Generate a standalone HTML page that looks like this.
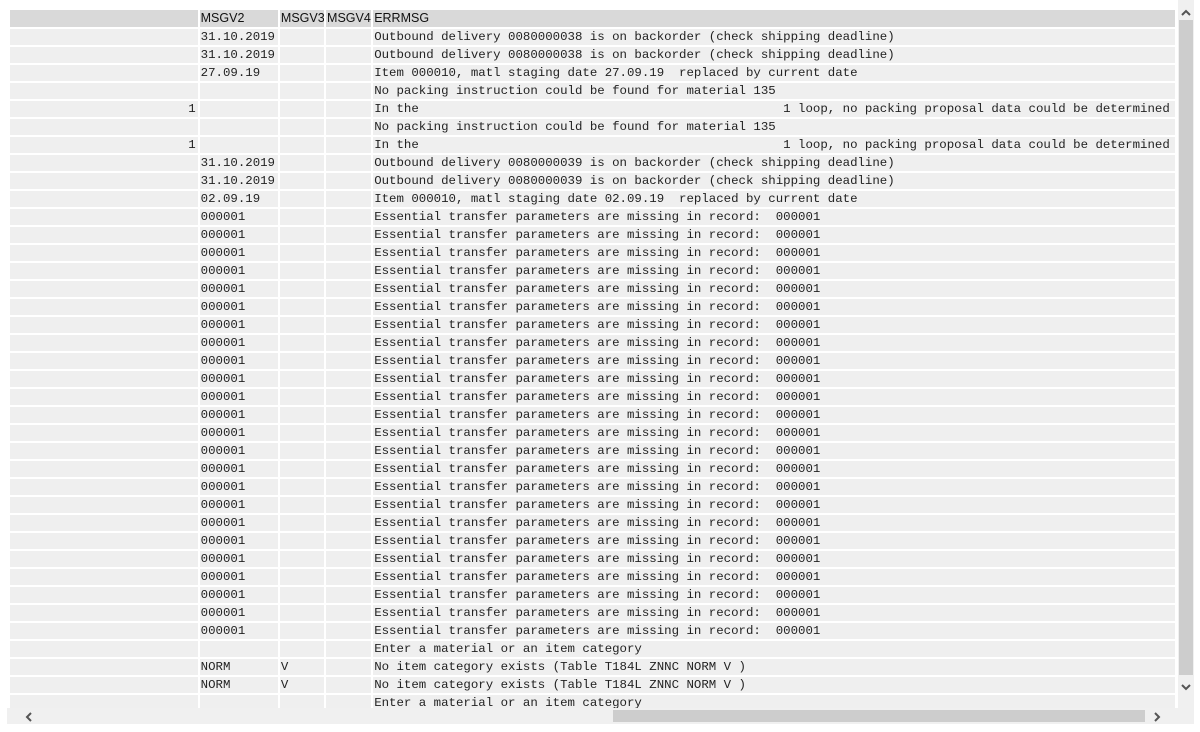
<!DOCTYPE html>
<html><head><meta charset="utf-8"><style>
body{margin:0;width:1200px;height:732px;background:#fff;position:relative;overflow:hidden}
#wrap{position:absolute;left:8px;top:8px;width:1167px;height:700px;overflow:hidden}
table{border-collapse:separate;border-spacing:2px;table-layout:fixed;width:1173px}
td,th{background:#efefef;height:16px;padding:0 0 0 1px;font:12.4px/16px "Liberation Mono","Courier New",monospace;color:#222;white-space:pre;overflow:hidden;text-align:left;vertical-align:middle}
th{background:#d9d9d9;height:16px;font:12.5px/17px "Liberation Sans",Arial,sans-serif;font-weight:normal;color:#111;padding-left:1px}
td.r{text-align:right;padding:0 2px 0 0}
#vs{position:absolute;left:1178px;top:0;width:16px;height:708px;background:#f0f0f0}
#vt{position:absolute;left:1179px;top:20px;width:14px;height:655px;background:#cdcdcd}
#hs{position:absolute;left:7px;top:708px;width:1187px;height:16px;background:#f0f0f0}
#ht{position:absolute;left:613px;top:710px;width:532px;height:12px;background:#cdcdcd}
svg{position:absolute}
</style></head><body>
<div id="wrap"><table>
<colgroup><col style="width:187px"><col style="width:78px"><col style="width:44px"><col style="width:45px"><col style="width:803px"></colgroup>
<tr><th></th><th>MSGV2</th><th>MSGV3</th><th>MSGV4</th><th>ERRMSG</th></tr>
<tr><td></td><td>31.10.2019</td><td></td><td></td><td>Outbound delivery 0080000038 is on backorder (check shipping deadline)</td></tr>
<tr><td></td><td>31.10.2019</td><td></td><td></td><td>Outbound delivery 0080000038 is on backorder (check shipping deadline)</td></tr>
<tr><td></td><td>27.09.19</td><td></td><td></td><td>Item 000010, matl staging date 27.09.19  replaced by current date</td></tr>
<tr><td></td><td></td><td></td><td></td><td>No packing instruction could be found for material 135</td></tr>
<tr><td class="r">1</td><td></td><td></td><td></td><td>In the                                                 1 loop, no packing proposal data could be determined</td></tr>
<tr><td></td><td></td><td></td><td></td><td>No packing instruction could be found for material 135</td></tr>
<tr><td class="r">1</td><td></td><td></td><td></td><td>In the                                                 1 loop, no packing proposal data could be determined</td></tr>
<tr><td></td><td>31.10.2019</td><td></td><td></td><td>Outbound delivery 0080000039 is on backorder (check shipping deadline)</td></tr>
<tr><td></td><td>31.10.2019</td><td></td><td></td><td>Outbound delivery 0080000039 is on backorder (check shipping deadline)</td></tr>
<tr><td></td><td>02.09.19</td><td></td><td></td><td>Item 000010, matl staging date 02.09.19  replaced by current date</td></tr>
<tr><td></td><td>000001</td><td></td><td></td><td>Essential transfer parameters are missing in record:  000001</td></tr>
<tr><td></td><td>000001</td><td></td><td></td><td>Essential transfer parameters are missing in record:  000001</td></tr>
<tr><td></td><td>000001</td><td></td><td></td><td>Essential transfer parameters are missing in record:  000001</td></tr>
<tr><td></td><td>000001</td><td></td><td></td><td>Essential transfer parameters are missing in record:  000001</td></tr>
<tr><td></td><td>000001</td><td></td><td></td><td>Essential transfer parameters are missing in record:  000001</td></tr>
<tr><td></td><td>000001</td><td></td><td></td><td>Essential transfer parameters are missing in record:  000001</td></tr>
<tr><td></td><td>000001</td><td></td><td></td><td>Essential transfer parameters are missing in record:  000001</td></tr>
<tr><td></td><td>000001</td><td></td><td></td><td>Essential transfer parameters are missing in record:  000001</td></tr>
<tr><td></td><td>000001</td><td></td><td></td><td>Essential transfer parameters are missing in record:  000001</td></tr>
<tr><td></td><td>000001</td><td></td><td></td><td>Essential transfer parameters are missing in record:  000001</td></tr>
<tr><td></td><td>000001</td><td></td><td></td><td>Essential transfer parameters are missing in record:  000001</td></tr>
<tr><td></td><td>000001</td><td></td><td></td><td>Essential transfer parameters are missing in record:  000001</td></tr>
<tr><td></td><td>000001</td><td></td><td></td><td>Essential transfer parameters are missing in record:  000001</td></tr>
<tr><td></td><td>000001</td><td></td><td></td><td>Essential transfer parameters are missing in record:  000001</td></tr>
<tr><td></td><td>000001</td><td></td><td></td><td>Essential transfer parameters are missing in record:  000001</td></tr>
<tr><td></td><td>000001</td><td></td><td></td><td>Essential transfer parameters are missing in record:  000001</td></tr>
<tr><td></td><td>000001</td><td></td><td></td><td>Essential transfer parameters are missing in record:  000001</td></tr>
<tr><td></td><td>000001</td><td></td><td></td><td>Essential transfer parameters are missing in record:  000001</td></tr>
<tr><td></td><td>000001</td><td></td><td></td><td>Essential transfer parameters are missing in record:  000001</td></tr>
<tr><td></td><td>000001</td><td></td><td></td><td>Essential transfer parameters are missing in record:  000001</td></tr>
<tr><td></td><td>000001</td><td></td><td></td><td>Essential transfer parameters are missing in record:  000001</td></tr>
<tr><td></td><td>000001</td><td></td><td></td><td>Essential transfer parameters are missing in record:  000001</td></tr>
<tr><td></td><td>000001</td><td></td><td></td><td>Essential transfer parameters are missing in record:  000001</td></tr>
<tr><td></td><td>000001</td><td></td><td></td><td>Essential transfer parameters are missing in record:  000001</td></tr>
<tr><td></td><td></td><td></td><td></td><td>Enter a material or an item category</td></tr>
<tr><td></td><td>NORM</td><td>V</td><td></td><td>No item category exists (Table T184L ZNNC NORM V )</td></tr>
<tr><td></td><td>NORM</td><td>V</td><td></td><td>No item category exists (Table T184L ZNNC NORM V )</td></tr>
<tr><td></td><td></td><td></td><td></td><td>Enter a material or an item category</td></tr>
</table></div>
<div id="vs"></div><div id="vt"></div>
<div id="hs"></div><div id="ht"></div>
<svg style="left:1180px;top:8px" width="12" height="10"><path d="M2 7 L6 3 L10 7" fill="none" stroke="#555" stroke-width="2"/></svg>
<svg style="left:1180px;top:682px" width="12" height="10"><path d="M2 3 L6 7 L10 3" fill="none" stroke="#555" stroke-width="2"/></svg>
<svg style="left:24px;top:711px" width="10" height="12"><path d="M7 2 L3 6 L7 10" fill="none" stroke="#555" stroke-width="2"/></svg>
<svg style="left:1152px;top:711px" width="10" height="12"><path d="M3 2 L7 6 L3 10" fill="none" stroke="#555" stroke-width="2"/></svg>
</body></html>
